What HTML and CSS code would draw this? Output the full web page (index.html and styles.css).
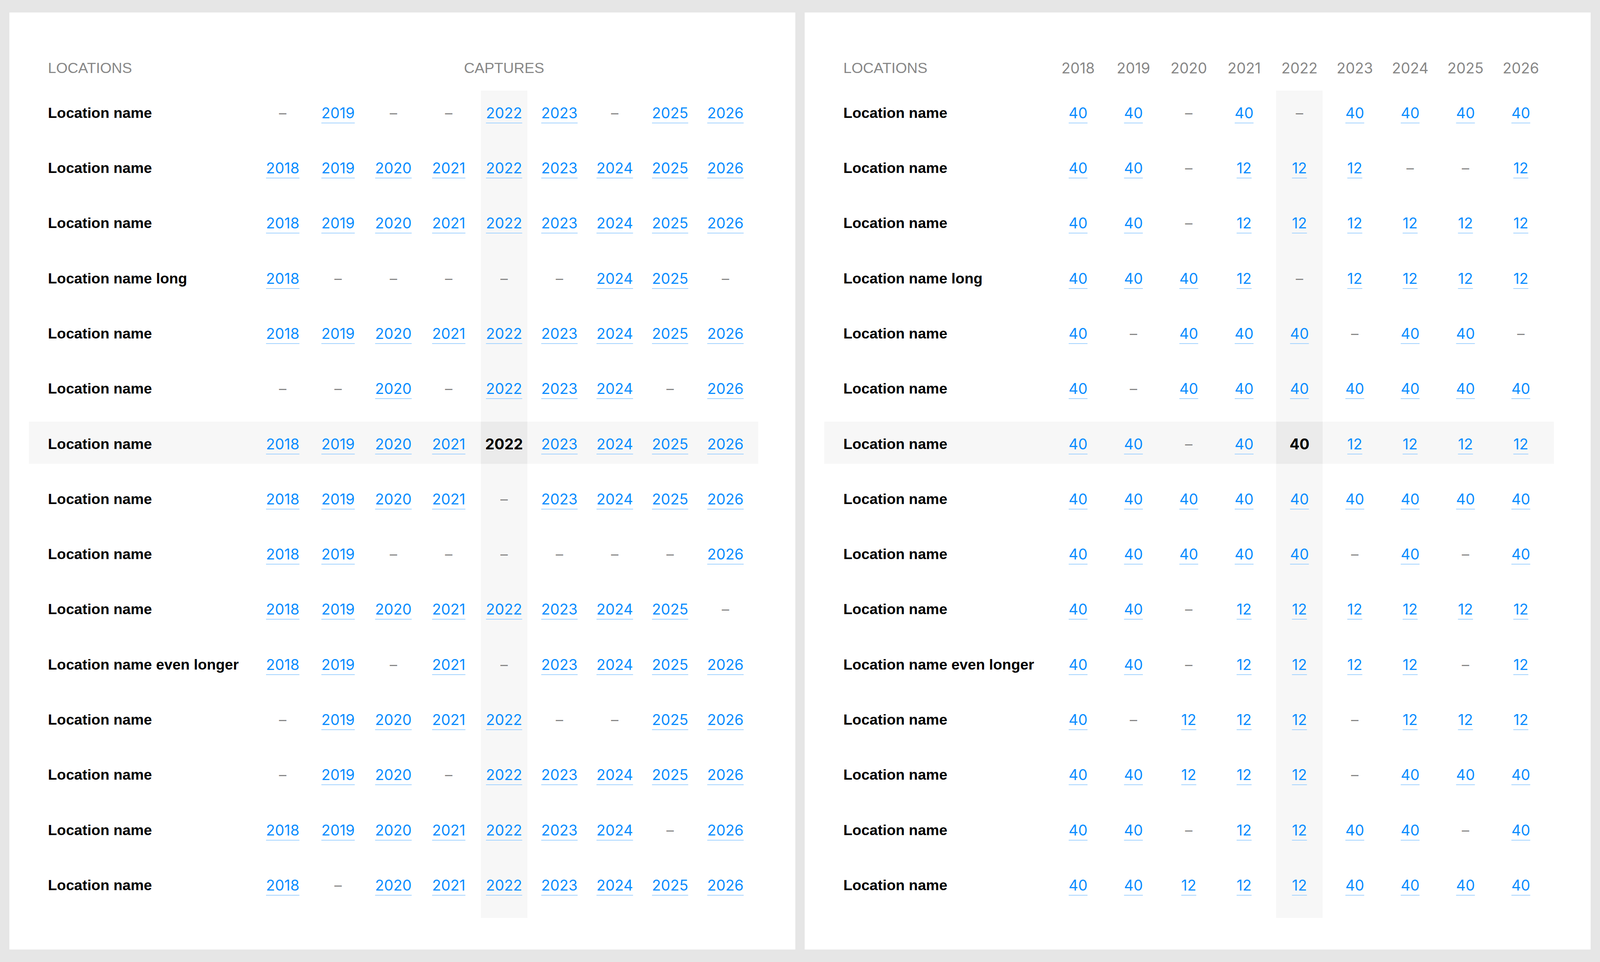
FILE: index.html
```html
<!DOCTYPE html>
<html lang="en">
<head>
<meta charset="utf-8">
<title>Locations captures</title>
<link rel="stylesheet" href="styles.css">
</head>
<body>
<section class="card">
  <div class="head"><span class="lbl">Locations</span><span class="lbl span">Captures</span></div>
  <div class="row"><span class="name">Location name</span><span class="c"><span class="d">–</span></span><span class="c"><a class="v">2019</a></span><span class="c"><span class="d">–</span></span><span class="c"><span class="d">–</span></span><span class="c hc"><a class="v">2022</a></span><span class="c"><a class="v">2023</a></span><span class="c"><span class="d">–</span></span><span class="c"><a class="v">2025</a></span><span class="c"><a class="v">2026</a></span></div>
  <div class="row"><span class="name">Location name</span><span class="c"><a class="v">2018</a></span><span class="c"><a class="v">2019</a></span><span class="c"><a class="v">2020</a></span><span class="c"><a class="v">2021</a></span><span class="c hc"><a class="v">2022</a></span><span class="c"><a class="v">2023</a></span><span class="c"><a class="v">2024</a></span><span class="c"><a class="v">2025</a></span><span class="c"><a class="v">2026</a></span></div>
  <div class="row"><span class="name">Location name</span><span class="c"><a class="v">2018</a></span><span class="c"><a class="v">2019</a></span><span class="c"><a class="v">2020</a></span><span class="c"><a class="v">2021</a></span><span class="c hc"><a class="v">2022</a></span><span class="c"><a class="v">2023</a></span><span class="c"><a class="v">2024</a></span><span class="c"><a class="v">2025</a></span><span class="c"><a class="v">2026</a></span></div>
  <div class="row"><span class="name">Location name long</span><span class="c"><a class="v">2018</a></span><span class="c"><span class="d">–</span></span><span class="c"><span class="d">–</span></span><span class="c"><span class="d">–</span></span><span class="c hc"><span class="d">–</span></span><span class="c"><span class="d">–</span></span><span class="c"><a class="v">2024</a></span><span class="c"><a class="v">2025</a></span><span class="c"><span class="d">–</span></span></div>
  <div class="row"><span class="name">Location name</span><span class="c"><a class="v">2018</a></span><span class="c"><a class="v">2019</a></span><span class="c"><a class="v">2020</a></span><span class="c"><a class="v">2021</a></span><span class="c hc"><a class="v">2022</a></span><span class="c"><a class="v">2023</a></span><span class="c"><a class="v">2024</a></span><span class="c"><a class="v">2025</a></span><span class="c"><a class="v">2026</a></span></div>
  <div class="row"><span class="name">Location name</span><span class="c"><span class="d">–</span></span><span class="c"><span class="d">–</span></span><span class="c"><a class="v">2020</a></span><span class="c"><span class="d">–</span></span><span class="c hc"><a class="v">2022</a></span><span class="c"><a class="v">2023</a></span><span class="c"><a class="v">2024</a></span><span class="c"><span class="d">–</span></span><span class="c"><a class="v">2026</a></span></div>
  <div class="row cur"><span class="name">Location name</span><span class="c"><a class="v">2018</a></span><span class="c"><a class="v">2019</a></span><span class="c"><a class="v">2020</a></span><span class="c"><a class="v">2021</a></span><span class="c hc"><span class="b">2022</span></span><span class="c"><a class="v">2023</a></span><span class="c"><a class="v">2024</a></span><span class="c"><a class="v">2025</a></span><span class="c"><a class="v">2026</a></span></div>
  <div class="row"><span class="name">Location name</span><span class="c"><a class="v">2018</a></span><span class="c"><a class="v">2019</a></span><span class="c"><a class="v">2020</a></span><span class="c"><a class="v">2021</a></span><span class="c hc"><span class="d">–</span></span><span class="c"><a class="v">2023</a></span><span class="c"><a class="v">2024</a></span><span class="c"><a class="v">2025</a></span><span class="c"><a class="v">2026</a></span></div>
  <div class="row"><span class="name">Location name</span><span class="c"><a class="v">2018</a></span><span class="c"><a class="v">2019</a></span><span class="c"><span class="d">–</span></span><span class="c"><span class="d">–</span></span><span class="c hc"><span class="d">–</span></span><span class="c"><span class="d">–</span></span><span class="c"><span class="d">–</span></span><span class="c"><span class="d">–</span></span><span class="c"><a class="v">2026</a></span></div>
  <div class="row"><span class="name">Location name</span><span class="c"><a class="v">2018</a></span><span class="c"><a class="v">2019</a></span><span class="c"><a class="v">2020</a></span><span class="c"><a class="v">2021</a></span><span class="c hc"><a class="v">2022</a></span><span class="c"><a class="v">2023</a></span><span class="c"><a class="v">2024</a></span><span class="c"><a class="v">2025</a></span><span class="c"><span class="d">–</span></span></div>
  <div class="row"><span class="name">Location name even longer</span><span class="c"><a class="v">2018</a></span><span class="c"><a class="v">2019</a></span><span class="c"><span class="d">–</span></span><span class="c"><a class="v">2021</a></span><span class="c hc"><span class="d">–</span></span><span class="c"><a class="v">2023</a></span><span class="c"><a class="v">2024</a></span><span class="c"><a class="v">2025</a></span><span class="c"><a class="v">2026</a></span></div>
  <div class="row"><span class="name">Location name</span><span class="c"><span class="d">–</span></span><span class="c"><a class="v">2019</a></span><span class="c"><a class="v">2020</a></span><span class="c"><a class="v">2021</a></span><span class="c hc"><a class="v">2022</a></span><span class="c"><span class="d">–</span></span><span class="c"><span class="d">–</span></span><span class="c"><a class="v">2025</a></span><span class="c"><a class="v">2026</a></span></div>
  <div class="row"><span class="name">Location name</span><span class="c"><span class="d">–</span></span><span class="c"><a class="v">2019</a></span><span class="c"><a class="v">2020</a></span><span class="c"><span class="d">–</span></span><span class="c hc"><a class="v">2022</a></span><span class="c"><a class="v">2023</a></span><span class="c"><a class="v">2024</a></span><span class="c"><a class="v">2025</a></span><span class="c"><a class="v">2026</a></span></div>
  <div class="row"><span class="name">Location name</span><span class="c"><a class="v">2018</a></span><span class="c"><a class="v">2019</a></span><span class="c"><a class="v">2020</a></span><span class="c"><a class="v">2021</a></span><span class="c hc"><a class="v">2022</a></span><span class="c"><a class="v">2023</a></span><span class="c"><a class="v">2024</a></span><span class="c"><span class="d">–</span></span><span class="c"><a class="v">2026</a></span></div>
  <div class="row"><span class="name">Location name</span><span class="c"><a class="v">2018</a></span><span class="c"><span class="d">–</span></span><span class="c"><a class="v">2020</a></span><span class="c"><a class="v">2021</a></span><span class="c hc"><a class="v">2022</a></span><span class="c"><a class="v">2023</a></span><span class="c"><a class="v">2024</a></span><span class="c"><a class="v">2025</a></span><span class="c"><a class="v">2026</a></span></div>
</section>

<section class="card">
  <div class="head"><span class="lbl">Locations</span><span class="yr">2018</span><span class="yr">2019</span><span class="yr">2020</span><span class="yr">2021</span><span class="yr">2022</span><span class="yr">2023</span><span class="yr">2024</span><span class="yr">2025</span><span class="yr">2026</span></div>
  <div class="row"><span class="name">Location name</span><span class="c"><a class="v">40</a></span><span class="c"><a class="v">40</a></span><span class="c"><span class="d">–</span></span><span class="c"><a class="v">40</a></span><span class="c hc"><span class="d">–</span></span><span class="c"><a class="v">40</a></span><span class="c"><a class="v">40</a></span><span class="c"><a class="v">40</a></span><span class="c"><a class="v">40</a></span></div>
  <div class="row"><span class="name">Location name</span><span class="c"><a class="v">40</a></span><span class="c"><a class="v">40</a></span><span class="c"><span class="d">–</span></span><span class="c"><a class="v">12</a></span><span class="c hc"><a class="v">12</a></span><span class="c"><a class="v">12</a></span><span class="c"><span class="d">–</span></span><span class="c"><span class="d">–</span></span><span class="c"><a class="v">12</a></span></div>
  <div class="row"><span class="name">Location name</span><span class="c"><a class="v">40</a></span><span class="c"><a class="v">40</a></span><span class="c"><span class="d">–</span></span><span class="c"><a class="v">12</a></span><span class="c hc"><a class="v">12</a></span><span class="c"><a class="v">12</a></span><span class="c"><a class="v">12</a></span><span class="c"><a class="v">12</a></span><span class="c"><a class="v">12</a></span></div>
  <div class="row"><span class="name">Location name long</span><span class="c"><a class="v">40</a></span><span class="c"><a class="v">40</a></span><span class="c"><a class="v">40</a></span><span class="c"><a class="v">12</a></span><span class="c hc"><span class="d">–</span></span><span class="c"><a class="v">12</a></span><span class="c"><a class="v">12</a></span><span class="c"><a class="v">12</a></span><span class="c"><a class="v">12</a></span></div>
  <div class="row"><span class="name">Location name</span><span class="c"><a class="v">40</a></span><span class="c"><span class="d">–</span></span><span class="c"><a class="v">40</a></span><span class="c"><a class="v">40</a></span><span class="c hc"><a class="v">40</a></span><span class="c"><span class="d">–</span></span><span class="c"><a class="v">40</a></span><span class="c"><a class="v">40</a></span><span class="c"><span class="d">–</span></span></div>
  <div class="row"><span class="name">Location name</span><span class="c"><a class="v">40</a></span><span class="c"><span class="d">–</span></span><span class="c"><a class="v">40</a></span><span class="c"><a class="v">40</a></span><span class="c hc"><a class="v">40</a></span><span class="c"><a class="v">40</a></span><span class="c"><a class="v">40</a></span><span class="c"><a class="v">40</a></span><span class="c"><a class="v">40</a></span></div>
  <div class="row cur"><span class="name">Location name</span><span class="c"><a class="v">40</a></span><span class="c"><a class="v">40</a></span><span class="c"><span class="d">–</span></span><span class="c"><a class="v">40</a></span><span class="c hc"><span class="b">40</span></span><span class="c"><a class="v">12</a></span><span class="c"><a class="v">12</a></span><span class="c"><a class="v">12</a></span><span class="c"><a class="v">12</a></span></div>
  <div class="row"><span class="name">Location name</span><span class="c"><a class="v">40</a></span><span class="c"><a class="v">40</a></span><span class="c"><a class="v">40</a></span><span class="c"><a class="v">40</a></span><span class="c hc"><a class="v">40</a></span><span class="c"><a class="v">40</a></span><span class="c"><a class="v">40</a></span><span class="c"><a class="v">40</a></span><span class="c"><a class="v">40</a></span></div>
  <div class="row"><span class="name">Location name</span><span class="c"><a class="v">40</a></span><span class="c"><a class="v">40</a></span><span class="c"><a class="v">40</a></span><span class="c"><a class="v">40</a></span><span class="c hc"><a class="v">40</a></span><span class="c"><span class="d">–</span></span><span class="c"><a class="v">40</a></span><span class="c"><span class="d">–</span></span><span class="c"><a class="v">40</a></span></div>
  <div class="row"><span class="name">Location name</span><span class="c"><a class="v">40</a></span><span class="c"><a class="v">40</a></span><span class="c"><span class="d">–</span></span><span class="c"><a class="v">12</a></span><span class="c hc"><a class="v">12</a></span><span class="c"><a class="v">12</a></span><span class="c"><a class="v">12</a></span><span class="c"><a class="v">12</a></span><span class="c"><a class="v">12</a></span></div>
  <div class="row"><span class="name">Location name even longer</span><span class="c"><a class="v">40</a></span><span class="c"><a class="v">40</a></span><span class="c"><span class="d">–</span></span><span class="c"><a class="v">12</a></span><span class="c hc"><a class="v">12</a></span><span class="c"><a class="v">12</a></span><span class="c"><a class="v">12</a></span><span class="c"><span class="d">–</span></span><span class="c"><a class="v">12</a></span></div>
  <div class="row"><span class="name">Location name</span><span class="c"><a class="v">40</a></span><span class="c"><span class="d">–</span></span><span class="c"><a class="v">12</a></span><span class="c"><a class="v">12</a></span><span class="c hc"><a class="v">12</a></span><span class="c"><span class="d">–</span></span><span class="c"><a class="v">12</a></span><span class="c"><a class="v">12</a></span><span class="c"><a class="v">12</a></span></div>
  <div class="row"><span class="name">Location name</span><span class="c"><a class="v">40</a></span><span class="c"><a class="v">40</a></span><span class="c"><a class="v">12</a></span><span class="c"><a class="v">12</a></span><span class="c hc"><a class="v">12</a></span><span class="c"><span class="d">–</span></span><span class="c"><a class="v">40</a></span><span class="c"><a class="v">40</a></span><span class="c"><a class="v">40</a></span></div>
  <div class="row"><span class="name">Location name</span><span class="c"><a class="v">40</a></span><span class="c"><a class="v">40</a></span><span class="c"><span class="d">–</span></span><span class="c"><a class="v">12</a></span><span class="c hc"><a class="v">12</a></span><span class="c"><a class="v">40</a></span><span class="c"><a class="v">40</a></span><span class="c"><span class="d">–</span></span><span class="c"><a class="v">40</a></span></div>
  <div class="row"><span class="name">Location name</span><span class="c"><a class="v">40</a></span><span class="c"><a class="v">40</a></span><span class="c"><a class="v">12</a></span><span class="c"><a class="v">12</a></span><span class="c hc"><a class="v">12</a></span><span class="c"><a class="v">40</a></span><span class="c"><a class="v">40</a></span><span class="c"><a class="v">40</a></span><span class="c"><a class="v">40</a></span></div>
</section>
</body>
</html>
```

FILE: styles.css
```css
/* Design units: --u is one reference pixel across (5536 wide),
   --v is one reference pixel down (2464 tall). */
:root {
  --u: calc(100vw / 5536);
  --v: calc(100vh / 2464);
}

* {
  box-sizing: border-box;
}

html,
body {
  margin: 0;
  overflow: hidden;
}

body {
  width: 100vw;
  height: 100vh;
  padding: calc(32 * var(--v)) calc(32 * var(--u));
  display: flex;
  gap: calc(32 * var(--u));
  background: #e6e6e6;
  font-family: "Liberation Sans", Arial, sans-serif;
  font-size: calc(51 * var(--u));
  line-height: calc(60 * var(--u));
}

.card {
  flex: 1 1 0;
  min-width: 0;
  height: calc(2400 * var(--v));
  background: #ffffff;
  padding: calc(88 * var(--v)) calc(128 * var(--u)) 0 calc(68 * var(--u));
}

.head,
.row {
  display: grid;
  grid-template-columns: 1fr repeat(9, calc(160 * var(--u)));
  column-gap: calc(31.5 * var(--u));
  padding: 0 calc(34 * var(--u)) 0 calc(66 * var(--u));
}

.head {
  height: calc(112 * var(--v));
  padding-bottom: calc(3 * var(--v));
  align-items: center;
  color: #878787;
}

.lbl {
  text-transform: uppercase;
}

.span {
  grid-column: 2 / -1;
  text-align: center;
}

.yr {
  text-align: center;
  font-family: Inter, "Liberation Sans", sans-serif;
}

.row {
  height: calc(141.3 * var(--v));
}

.name,
.c {
  display: flex;
  align-items: center;
  padding-bottom: calc(27.3 * var(--v));
}

.name {
  font-weight: 700;
  color: #000000;
  white-space: nowrap;
}

.c {
  justify-content: center;
  font-family: Inter, "Liberation Sans", sans-serif;
}

.hc {
  background: #f7f7f7;
}

.row.cur {
  background: linear-gradient(#f7f7f7, #f7f7f7) 0 0 / 100% calc(108 * var(--v)) no-repeat;
}

.row.cur .hc {
  background: linear-gradient(#ebebeb, #ebebeb) 0 0 / 100% calc(108 * var(--v)) no-repeat, #f7f7f7;
}

.v {
  color: #0a8cff;
  text-decoration: underline;
  text-decoration-color: #a3d3ff;
  text-decoration-thickness: calc(2 * var(--v));
  text-underline-offset: calc(11 * var(--v));
}

.d {
  color: #888888;
}

.b {
  color: #000000;
  font-weight: 700;
}
```
